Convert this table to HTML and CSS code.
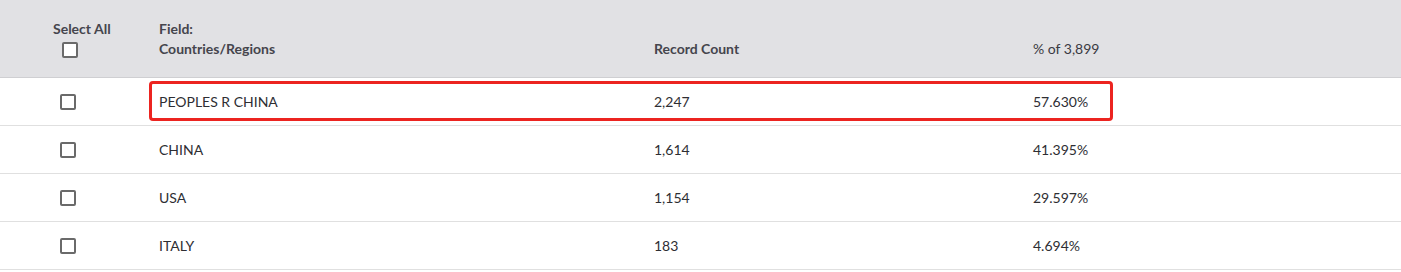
FILE: index.html
```html
<!DOCTYPE html>
<html lang="en">
<head>
<meta charset="utf-8">
<title>Countries/Regions</title>
<link rel="stylesheet" href="styles.css">
</head>
<body>
<div class="table">
  <div class="head">
    <div class="cell sel-head">
      <span class="sel-label">Select All</span>
      <span class="box head-box"></span>
    </div>
    <div class="cell field-head">
      <span>Field:</span>
      <span>Countries/Regions</span>
    </div>
    <div class="cell col-head">Record Count</div>
    <div class="cell col-head pct-head">% of 3,899</div>
  </div>
  <div class="row">
    <div class="cell sel"><span class="box"></span></div>
    <div class="cell">PEOPLES R CHINA</div>
    <div class="cell">2,247</div>
    <div class="cell">57.630%</div>
    <div class="highlight"></div>
  </div>
  <div class="row">
    <div class="cell sel"><span class="box"></span></div>
    <div class="cell">CHINA</div>
    <div class="cell">1,614</div>
    <div class="cell">41.395%</div>
  </div>
  <div class="row">
    <div class="cell sel"><span class="box"></span></div>
    <div class="cell">USA</div>
    <div class="cell">1,154</div>
    <div class="cell">29.597%</div>
  </div>
  <div class="row">
    <div class="cell sel"><span class="box"></span></div>
    <div class="cell">ITALY</div>
    <div class="cell">183</div>
    <div class="cell">4.694%</div>
  </div>
</div>
</body>
</html>
```

FILE: styles.css
```css
* { box-sizing: border-box; }
html, body { margin: 0; padding: 0; background: #ffffff; }
body {
  font-family: "Lato", "Liberation Sans", sans-serif;
  font-size: 14px;
  color: #2e2e33;
}
.table { width: 100%; }
.head, .row {
  display: grid;
  grid-template-columns: 159px 495px 379px 1fr;
}
.head {
  background: #e1e1e4;
  height: 78px;
  border-bottom: 1px solid #cfcfd2;
  color: #45454d;
  font-weight: 700;
}
.head .cell { padding-top: 19px; line-height: 20px; }
.sel-head {
  display: flex;
  flex-direction: column;
  align-items: flex-start;
  padding-left: 53px;
}
.head-box { margin: 3px 0 0 9px; width: 15px; height: 15px; }
.field-head { display: flex; flex-direction: column; }
.col-head { padding-top: 39px !important; }
.pct-head { font-weight: 400; color: #3a3a42; }
.row {
  position: relative;
  height: 48px;
  border-bottom: 1px solid #e0e0e0;
  align-items: center;
}
.row .cell { line-height: 20px; padding-top: 1px; }
.sel { padding-left: 60px; display: flex; align-items: center; }
.box {
  display: block;
  width: 16px;
  height: 16px;
  border: 2px solid #6a6a6a;
  border-radius: 2px;
  background: #fff;
}
.highlight {
  position: absolute;
  left: 149px;
  top: 3px;
  width: 964px;
  height: 40px;
  border: 3px solid #ec2420;
  border-radius: 4px;
  pointer-events: none;
}
```
